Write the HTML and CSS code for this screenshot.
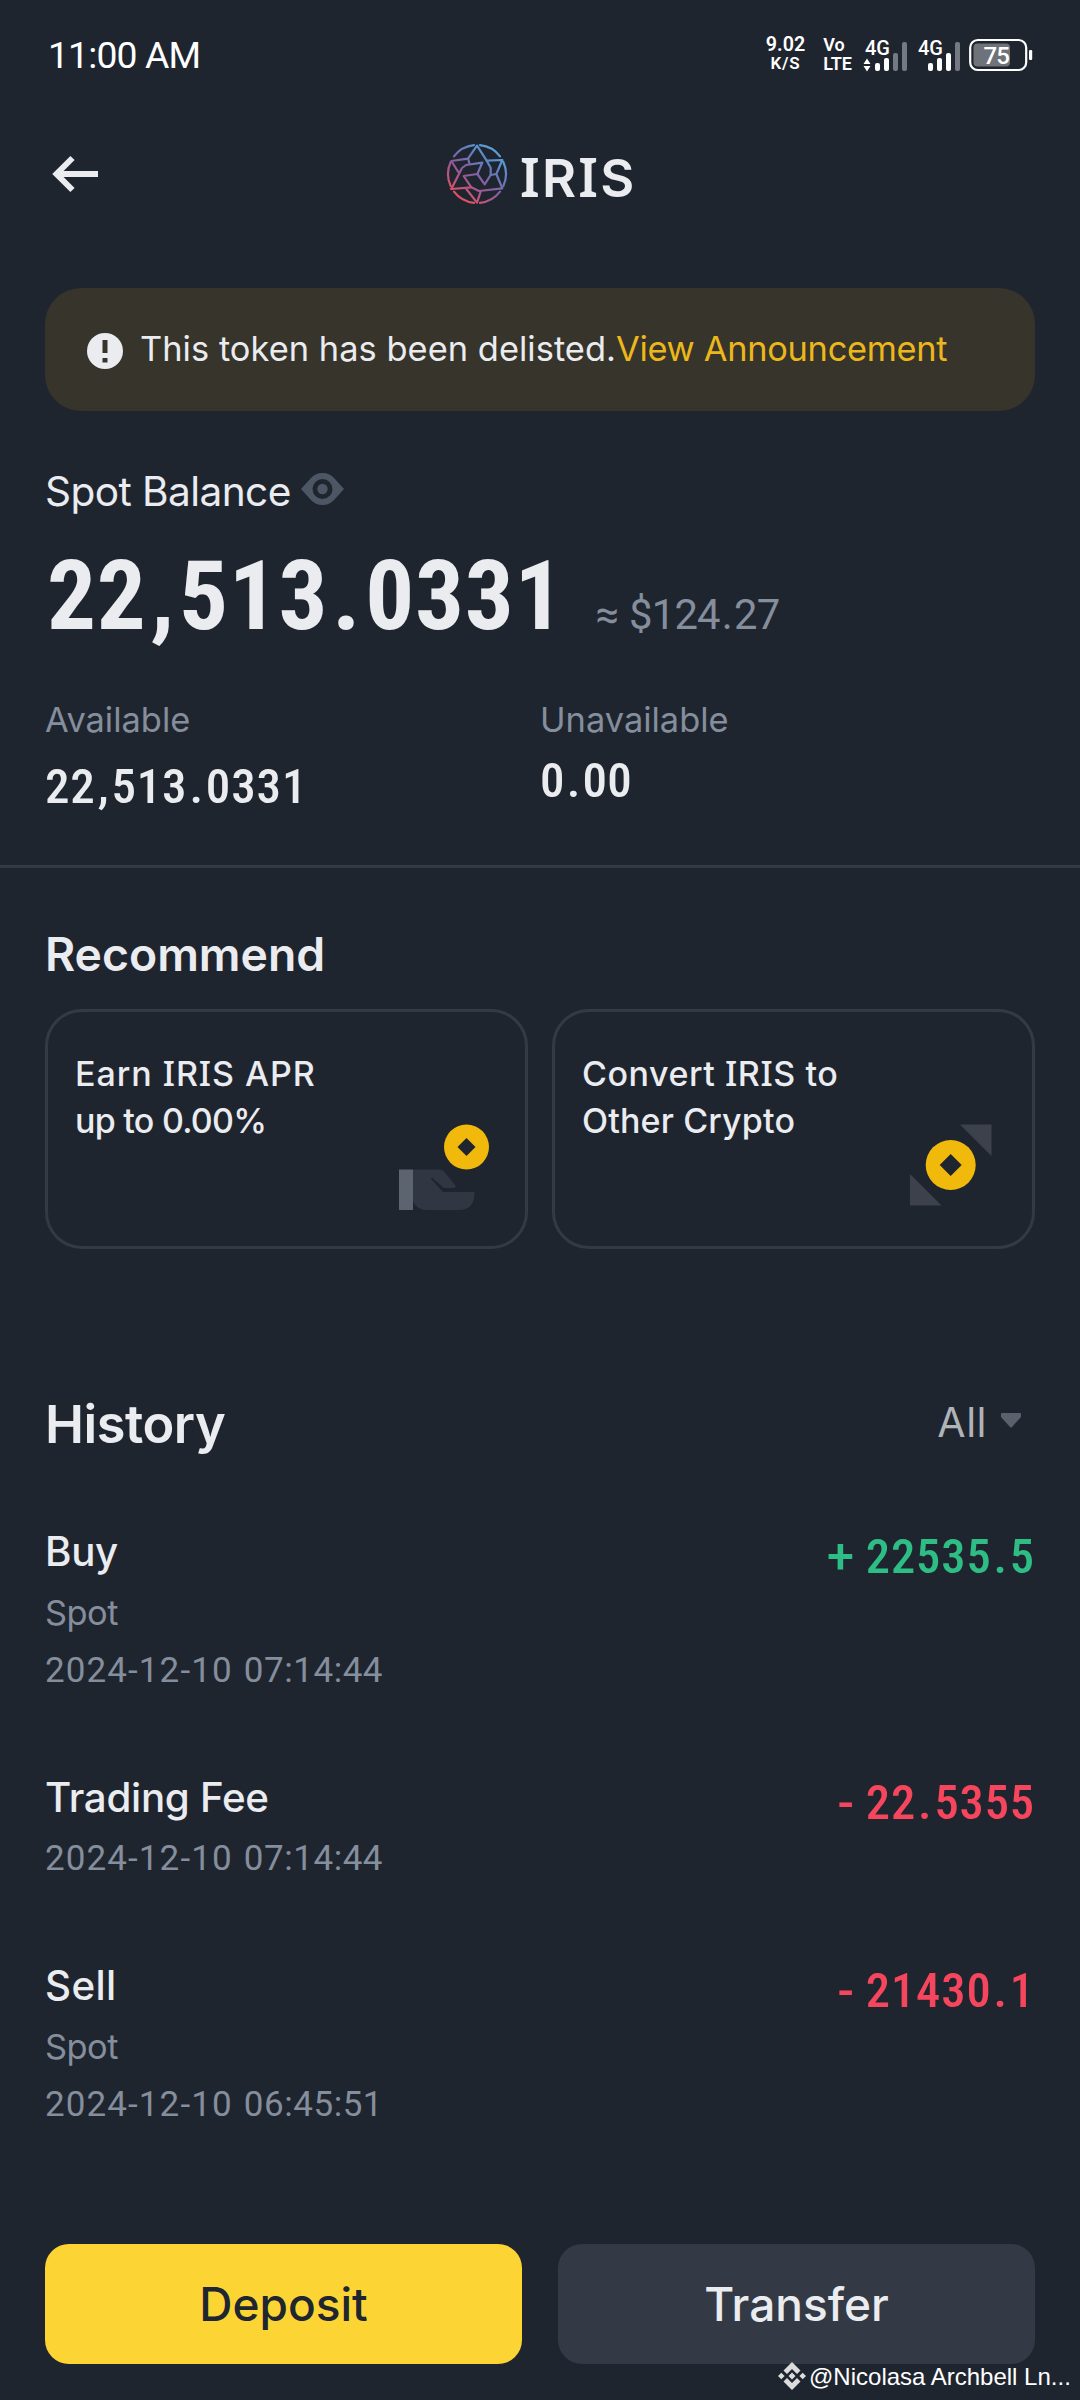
FILE: index.html
```
<!DOCTYPE html>
<html lang="en">
<head>
<meta charset="utf-8">
<title>IRIS</title>
<link rel="stylesheet" href="styles.css">
</head>
<body>
<div class="status">
  <span class="clock">11:00 AM</span>
  <div class="indicators">
    <div class="stack speed"><span class="rate">9.02</span><span class="unit">K/S</span></div>
    <div class="stack volte"><span>Vo</span><span>LTE</span></div>
    <svg class="signal" width="44" height="34" viewBox="0 0 44 34">
      <text x="0" y="16.5" class="net">4G</text>
      <path d="M-1.5 26 L2 20.500 L5.500 26Z M-1.500 28 L2 33.500 L5.500 28Z" fill="#fff"/>
      <rect x="10" y="25" width="5" height="8" rx="2" fill="#fff"/><rect x="19" y="20" width="5" height="13" rx="2" fill="#fff"/>
      <rect x="28" y="15" width="5" height="18" rx="2" fill="#757a82"/><rect x="37" y="4" width="5" height="29" rx="2" fill="#757a82"/>
    </svg>
    <svg class="signal second" width="44" height="34" viewBox="0 0 44 34">
      <text x="0" y="16.5" class="net">4G</text>
      <rect x="10" y="25" width="5" height="8" rx="2" fill="#fff"/><rect x="19" y="20" width="5" height="13" rx="2" fill="#fff"/>
      <rect x="28" y="15" width="5" height="18" rx="2" fill="#fff"/><rect x="37" y="4" width="5" height="29" rx="2" fill="#757a82"/>
    </svg>
    <svg class="battery" width="64" height="34" viewBox="0 0 64 34">
      <rect x="1.200" y="2" width="56" height="30" rx="7.500" fill="none" stroke="#fff" stroke-width="2.200"/>
      <rect x="4.500" y="5.500" width="36.500" height="23" rx="4" fill="#6e7279"/>
      <rect x="60" y="12" width="3.200" height="10" rx="1.200" fill="#fff"/>
      <text x="14.500" y="25.500" class="level">75</text>
    </svg>
  </div>
</div>

<header class="header">
  <svg class="back" width="46" height="38" viewBox="0 0 46 38"><path d="M46 19H6M20.500 3L4.500 19L20.500 35" fill="none" stroke="#eaecef" stroke-width="6"/></svg>
  <div class="title">
    <svg class="logo" width="60" height="60" viewBox="0 0 180 180">
      <defs><linearGradient id="iris" gradientUnits="userSpaceOnUse" x1="35" y1="165" x2="145" y2="25"><stop offset="0" stop-color="#e8505f"/><stop offset=".45" stop-color="#8a5c9e"/><stop offset=".8" stop-color="#5b86c4"/><stop offset="1" stop-color="#5b9fd6"/></linearGradient></defs>
      <g fill="none" stroke="url(#iris)" stroke-width="6.500" stroke-linejoin="round" stroke-linecap="round">
        <path d="M99 3.500A87 87 0 0 1 159 37M169 54A87 87 0 0 1 169 126M159 143A87 87 0 0 1 99 176.500M81 176.500A87 87 0 0 1 21 143M11 126A87 87 0 0 1 11 54M21 37A87 87 0 0 1 81 3.500"/>
        <path d="M90 5L63 44L13 51L34 84M63 44L68 60M90 5L119 50L131 71V93L113 121L91 90"/>
        <path d="M13 135L45 72L57 63L106 56L91 90L50 96L73 130L96 141L166 133L148 90L166 48L119 50M148 90L131 93"/>
        <path d="M13 135L73 130M58 135L90 176L101 143"/>
      </g>
    </svg>
    <h1><i>I</i>R<i>I</i>S</h1>
  </div>
</header>

<main>
  <div class="alert">
    <svg width="36" height="36" viewBox="0 0 36 36"><circle cx="18" cy="18" r="18" fill="#eaecef"/><path d="M15.500 7h5v13h-5zM15.500 25h5v4.500h-5z" fill="#36342b"/></svg>
    <p><span>This token has been delisted.</span><a>View Announcement</a></p>
  </div>

  <section class="balance">
    <div class="label-row">
      <span>Spot Balance</span>
      <svg width="43" height="32" viewBox="0 0 43 32"><path fill="#4c5665" fill-rule="evenodd" d="M0 16L10 5Q14.500 0 21.500 0T33 5L43 16L33 27Q28.500 32 21.500 32T10 27ZM21.500 6a10 10 0 1 0 0 20a10 10 0 1 0 0-20Z"/><circle cx="21.500" cy="16" r="5.200" fill="#4c5665"/></svg>
    </div>
    <div class="total">
      <span class="big num">22<b>,</b>513<b>.</b>0331</span>
      <span class="fiat"><span class="approx">≈</span><span class="usd">$124<b>.</b>27</span></span>
    </div>
    <div class="split">
      <div><div class="caption">Available</div><div class="value num">22<b>,</b>513<b>.</b>0331</div></div>
      <div class="right"><div class="caption">Unavailable</div><div class="value num">0<b>.</b>00</div></div>
    </div>
  </section>

  <section class="recommend">
    <h2>Recommend</h2>
    <div class="cards">
      <div class="card">
        <p><span class="wide">Earn <i>I</i>R<i>I</i>S APR</span><br><span class="tight">up to 0.00%</span></p>
        <svg class="earn" width="92" height="88" viewBox="0 0 92 88">
          <rect x="1" y="45.500" width="14" height="40.500" fill="#5c6470"/>
          <path d="M15 45.500H41Q44 45.500 46 47.500L57 61Q59 64 55 64H46L34 53.500L33 55L45 68H76.500Q77 86 60 86H28Q20 86 15 78Z" fill="#313742"/>
          <circle cx="68.500" cy="23" r="22.500" fill="#f0b90b"/><path d="M68.500 14l9 9l-9 9l-9-9z" fill="#1f252f"/>
        </svg>
      </div>
      <div class="card">
        <p><span class="convert-text">Convert <i>I</i>R<i>I</i>S to</span><br><span>Other Crypto</span></p>
        <svg class="convert" width="82" height="82" viewBox="0 0 82 82">
          <path d="M50 .500H81.500V32ZM0 50V81.500H31.500Z" fill="#3c414b"/>
          <circle cx="40.700" cy="41" r="25" fill="#f0b90b"/><path d="M40.700 30l11 11l-11 11l-11-11z" fill="#1f252f"/>
        </svg>
      </div>
    </div>
  </section>

  <section class="history">
    <div class="history-head">
      <h2>History</h2>
      <div class="filter"><span>All</span><svg width="20" height="15" viewBox="0 0 20 15"><path d="M1 0H19Q20 0 20 1V4L11 14Q10 15 9 14L0 4V1Q0 0 1 0Z" fill="#59616d"/></svg></div>
    </div>
    <div class="entry">
      <div><div class="name">Buy</div><div class="kind">Spot</div><div class="date"><span>2024-12-10</span><span class="time">07:14:44</span></div></div>
      <div class="amount num up"><s>+</s><span>22535<b>.</b>5</span></div>
    </div>
    <div class="entry">
      <div><div class="name">Trading Fee</div><div class="date"><span>2024-12-10</span><span class="time">07:14:44</span></div></div>
      <div class="amount num down"><s>-</s><span>22<b>.</b>5355</span></div>
    </div>
    <div class="entry">
      <div><div class="name sell">Sell</div><div class="kind">Spot</div><div class="date"><span>2024-12-10</span><span class="time">06:45:51</span></div></div>
      <div class="amount num down"><s>-</s><span>21430<b>.</b>1</span></div>
    </div>
  </section>
</main>

<footer class="actions">
  <button class="primary">Deposit</button>
  <button class="secondary">Transfer</button>
</footer>

<div class="credit">
  <svg width="28" height="28" viewBox="0 0 28 28" fill="#dcdcdc"><path d="M14 0L22.500 8.500L19 12L14 7L9 12L5.500 8.500ZM14 28L22.500 19.500L19 16L14 21L9 16L5.500 19.500ZM14 10.500l3.500 3.500l-3.500 3.500l-3.500-3.500zM3.300 10.700l3.300 3.300l-3.300 3.300L0 14zM24.700 10.700L28 14l-3.300 3.300L21.400 14z"/></svg>
  <span>@Nicolasa Archbell Ln...</span>
</div>
</body>
</html>
```
FILE: styles.css
```
* { box-sizing: border-box; margin: 0; padding: 0; }
body {
  position: relative;
  width: 1080px;
  height: 2400px;
  display: flex;
  flex-direction: column;
  background: #1f252f;
  color: #eaecef;
  font-family: Inter, "Noto Sans", sans-serif;
  overflow: hidden;
}
svg { display: block; flex: none; overflow: visible; }
i { font-family: "Noto Sans", sans-serif; font-style: normal; font-size: 1.018em; line-height: 0; }
b { font-weight: inherit; }
s { text-decoration: none; }
p, span { white-space: nowrap; }

.status { height: 110px; padding: 0 47px 0 48px; display: flex; align-items: center; justify-content: space-between; font-family: Roboto, sans-serif; color: #fff; }
.clock { font-size: 37.300px; letter-spacing: -.85px; }
.indicators { display: flex; align-items: center; }
.stack { display: flex; flex-direction: column; font-weight: 600; font-size: 18px; line-height: 19px; margin-bottom: 2px; }
.speed { align-items: center; margin-right: 18px; }
.rate { font-size: 19.700px; }
.unit { font-size: 17px; letter-spacing: .8px; }
.volte { margin-right: 13px; }
.signal { margin-right: 9px; }
.second { margin-right: 7px; }
.net { font: 500 20px Roboto, sans-serif; fill: #fff; }
.level { font: 500 24px Roboto, sans-serif; letter-spacing: -1px; fill: #fff; }

.header { height: 136px; padding-left: 52px; display: flex; align-items: center; }
.back { margin-bottom: 8px; }
.title { flex: 1; display: flex; align-items: center; gap: 13px; margin-left: 349px; }
.logo { margin-bottom: 8px; }
h1 { font-size: 52.300px; font-weight: 600; line-height: 70px; letter-spacing: 2.200px; }

main { display: flex; flex-direction: column; }
.alert { margin: 42px 45px 0; height: 123px; padding: 3px 42px 0; border-radius: 36px; background: #36342b; display: flex; align-items: center; gap: 17px; font-size: 34.400px; }
.alert p { line-height: 44px; margin-bottom: 4px; letter-spacing: .04px; }
.alert a { color: #ecb71b; letter-spacing: -.3px; }

.balance { padding: 56px 45px 48px; border-bottom: 3px solid #333a46; }
.label-row { display: flex; align-items: center; gap: 10px; height: 50px; font-size: 40.600px; line-height: 50px; letter-spacing: -.58px; }
.label-row svg { margin-bottom: 6px; }
.num { font-family: Roboto, sans-serif; font-stretch: 85%; }
.num b { padding: 0 .04em; }
.total { margin-top: 24px; height: 108px; display: flex; align-items: baseline; line-height: 110px; }
.big { font-size: 97px; font-weight: 700; letter-spacing: .8px; margin-left: 2px; }
.fiat { margin-left: 31px; color: #848e9c; font-family: Roboto, sans-serif; font-size: 41.800px; line-height: 50px; }
.approx { margin-right: 10px; }
.usd { font-stretch: 90%; letter-spacing: -.800px; }
.usd b { padding: 0 2px; }
.split { margin-top: 51px; display: grid; grid-template-columns: 495px 495px; }
.caption { color: #848e9c; font-size: 34.400px; line-height: 40px; }
.value { margin-top: 17px; font-size: 49px; font-weight: 500; line-height: 60px; letter-spacing: .850px; }
.right .value { margin-top: 11px; letter-spacing: .2px; }

.recommend { padding: 56px 45px 0; }
h2 { font-weight: 600; font-size: 46.300px; line-height: 60px; }
.cards { margin-top: 25px; display: grid; grid-template-columns: 1fr 1fr; gap: 24px; }
.card { height: 240px; padding: 38px 29px 0 27px; border: 3px solid #333a45; border-radius: 37px; display: flex; justify-content: space-between; }
.card p { font-size: 34px; font-weight: 500; line-height: 47px; letter-spacing: .15px; }
.card .wide { letter-spacing: .950px; }
.card .convert-text { letter-spacing: .550px; }
.card .tight { letter-spacing: -.75px; }
.earn, .convert { align-self: flex-start; margin-top: 74px; }
.earn { margin-right: 6px; }
.convert { margin-right: 11px; }

.history { margin-top: 140px; padding: 0 45px; }
.history-head { display: flex; justify-content: space-between; margin-bottom: 61px; height: 70px; }
.history h2 { font-size: 52.300px; line-height: 70px; letter-spacing: -.47px; }
.filter { display: flex; align-items: center; gap: 14px; margin-right: 14px; padding-bottom: 4px; color: #b0b3b8; font-size: 41px; letter-spacing: .5px; }
.filter svg { margin-bottom: 4px; }
.entry { display: flex; justify-content: space-between; margin-bottom: 66px; }
.name { font-size: 40.300px; font-weight: 500; line-height: 64px; letter-spacing: -.3px; }
.sell { letter-spacing: .4px; }
.kind { color: #848e9c; font-size: 34.400px; line-height: 58px; letter-spacing: -.5px; }
.date { display: flex; gap: 11px; padding-top: 1px; margin-bottom: 1px; color: #848e9c; font-family: Roboto, sans-serif; font-size: 35px; line-height: 56px; letter-spacing: 1.100px; }
.time { letter-spacing: .550px; }
.amount { font-size: 48.500px; font-weight: 500; line-height: 74px; letter-spacing: .9px; display: flex; }
.amount s { margin-right: 11px; font-stretch: 100%; }
.up { color: #2ebd85; }
.down { color: #f6465d; }

.actions { margin: auto 45px 36px; display: grid; grid-template-columns: 1fr 1fr; gap: 36px; }
button { height: 120px; padding-top: 1px; border: 0; border-radius: 24px; font: 500 46px/119px Inter, sans-serif; color: #eaecef; }
.primary { background: #fcd535; color: #202630; }
.secondary { background: #333a45; }

.credit { position: absolute; left: 778px; top: 2361px; display: flex; align-items: center; gap: 3px; color: #fff; font: 24px/32px "Liberation Sans", sans-serif; }
.credit svg { margin-bottom: 2px; }
```
